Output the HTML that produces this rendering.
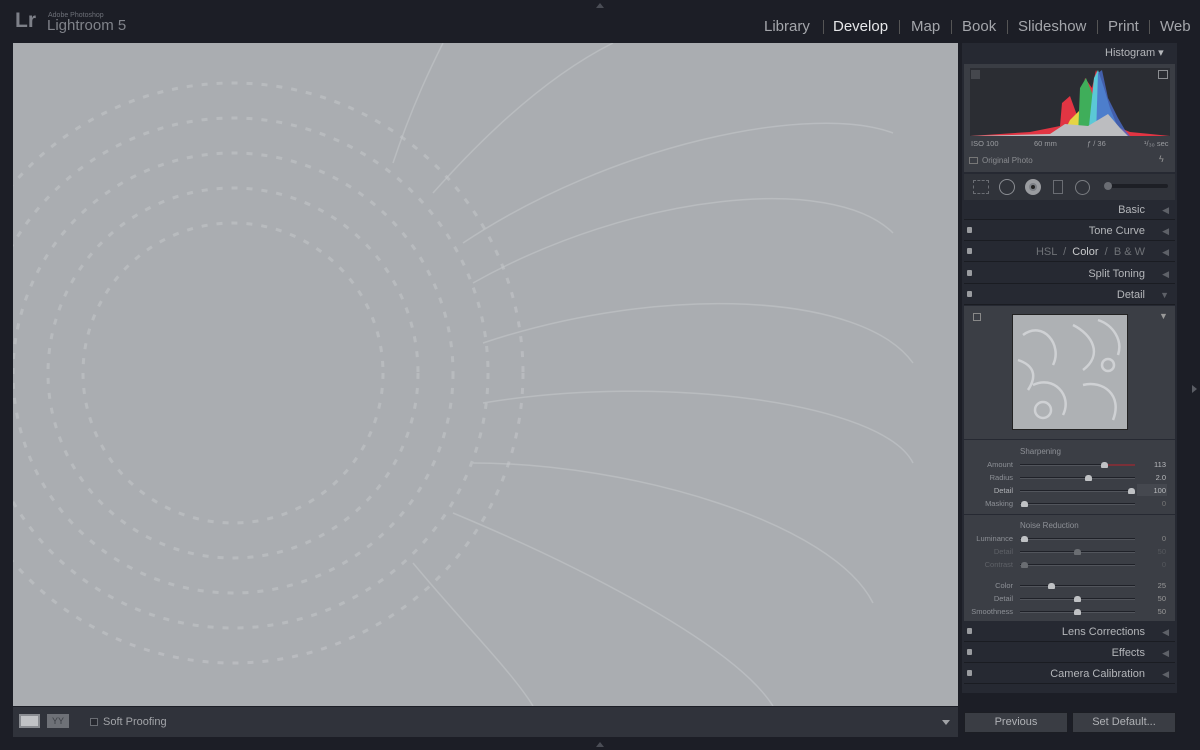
<!DOCTYPE html><html><head><style>
*{margin:0;padding:0;box-sizing:border-box}
body{width:1200px;height:750px;background:#1c1e26;font-family:"Liberation Sans",sans-serif;position:relative;overflow:hidden;color:#c9cacc}
.a{position:absolute}
.nav{top:18px;font-size:15px;color:#a4a6ab}
.img{left:13px;top:43px;width:945px;height:663px;background:#a9acb0;overflow:hidden}
.hdr{position:absolute;left:964px;width:211px;height:20px;background:#262932;border-bottom:1px solid #1a1c22;font-size:11px;color:#b4b6ba;text-align:right;padding-right:30px;line-height:20px}
.hdr .t{position:absolute;right:6px;top:0;color:#5e6168;font-size:9px}
.hdr .sw{position:absolute;left:3px;top:6px;width:5px;height:6px;background:#9a9ca0;border-radius:1px}
.lb{position:absolute;font-size:7.5px;color:#8d9096;text-align:right;width:60px}
.tr{position:absolute;left:1020px;width:115px;height:2px;background:#1f2128;border-bottom:1px solid #52555c}
.kn{position:absolute;width:7px;height:6px;background:#bfc1c4;border-radius:3px 3px 1px 1px}
.vl{position:absolute;left:1140px;width:26px;text-align:right;font-size:7.5px;color:#b8babd}
</style></head><body>
<div class="a" style="left:15px;top:9px;font-size:21px;color:#7d8088;font-weight:bold">Lr</div>
<div class="a" style="left:48px;top:12px;font-size:7px;color:#6d7078">Adobe Photoshop</div>
<div class="a" style="left:47px;top:17px;font-size:15px;color:#80838a">Lightroom 5</div>
<div class="a" style="left:596px;top:3px;width:0;height:0;border:4px solid transparent;border-bottom:5px solid #4a4d55;border-top:0"></div>
<div class="a nav" style="left:764px">Library</div>
<div class="a nav" style="left:833px;color:#e6e7e9">Develop</div>
<div class="a nav" style="left:911px">Map</div>
<div class="a nav" style="left:962px">Book</div>
<div class="a nav" style="left:1018px">Slideshow</div>
<div class="a nav" style="left:1108px">Print</div>
<div class="a nav" style="left:1160px">Web</div>
<div class="a" style="left:823px;top:20px;width:1px;height:14px;background:#555"></div>
<div class="a" style="left:899px;top:20px;width:1px;height:14px;background:#555"></div>
<div class="a" style="left:951px;top:20px;width:1px;height:14px;background:#555"></div>
<div class="a" style="left:1007px;top:20px;width:1px;height:14px;background:#555"></div>
<div class="a" style="left:1097px;top:20px;width:1px;height:14px;background:#555"></div>
<div class="a" style="left:1149px;top:20px;width:1px;height:14px;background:#555"></div>

<div class="a img">
<svg width="945" height="663" style="position:absolute;left:0;top:0" fill="none" stroke-width="1.5">
<rect width="945" height="663" fill="#aaadb1"/>
<g stroke="#c3c6c9" opacity="0.6">
<path d="M450 200 C600 100 800 60 880 90"/><path d="M460 240 C620 150 820 130 880 190"/>
<path d="M470 300 C650 240 850 250 900 320"/><path d="M470 360 C650 330 870 360 900 420"/>
<path d="M460 420 C620 420 820 480 860 560"/><path d="M440 470 C560 520 720 600 760 663"/>
<path d="M400 520 C450 580 500 630 520 663"/><path d="M420 150 C500 60 560 20 600 0"/>
<path d="M380 120 C400 60 420 20 430 0"/>
</g>
<g stroke="#c4c7ca" stroke-width="3" stroke-dasharray="6 9" opacity="0.55">
<circle cx="220" cy="330" r="150"/><circle cx="220" cy="330" r="185"/><circle cx="220" cy="330" r="220"/><circle cx="220" cy="330" r="255"/><circle cx="220" cy="330" r="290"/>
</g>
</svg></div>

<div class="a" style="left:13px;top:707px;width:945px;height:30px;background:#30333b"></div>
<div class="a" style="left:19px;top:714px;width:21px;height:14px;background:#c1c3c6;border:2px solid #8a8d92"></div>
<div class="a" style="left:47px;top:714px;width:22px;height:14px;background:#6e7177;font-size:9px;color:#3c3f45;text-align:center;line-height:14px">YY</div>
<div class="a" style="left:90px;top:718px;width:8px;height:8px;border:1px solid #6a6d73;background:#26282f"></div>
<div class="a" style="left:103px;top:716px;font-size:11px;color:#a2a4a8">Soft Proofing</div>
<div class="a" style="left:942px;top:720px;width:0;height:0;border:4px solid transparent;border-top:5px solid #a0a2a6;border-bottom:0"></div>

<div class="a" style="left:962px;top:43px;width:215px;height:650px;background:#262932"></div>
<div class="a" style="left:1105px;top:46px;font-size:11px;color:#b4b6ba">Histogram &#9662;</div>
<div class="a" style="left:964px;top:64px;width:211px;height:108px;background:#3a3d44"></div>
<div class="a" style="left:970px;top:68px;width:200px;height:68px;background:#2b2d33;overflow:hidden">
<svg width="200" height="68"><path d="M0 68 L60 64 80 60 90 58 92 35 100 28 108 50 110 38 115 10 122 20 126 2 132 15 138 40 145 58 160 64 200 68Z" fill="#e23543"/>
<path d="M92 68 L100 52 110 42 118 55 125 30 135 45 140 68Z" fill="#e5d443"/>
<path d="M108 68 L110 20 116 10 124 30 126 55 130 68Z" fill="#3fae5a"/>
<path d="M118 68 L124 10 128 2 134 20 140 40 148 60 150 68Z" fill="#5bc8d6"/>
<path d="M126 68 L128 5 132 2 138 30 148 50 155 62 160 68Z" fill="#4a6bc9" opacity=".8"/>
<path d="M0 68 L80 66 95 56 118 58 138 46 150 60 158 68Z" fill="#bcbdc0"/></svg></div>
<div class="a" style="left:971px;top:70px;width:9px;height:9px;background:#45474d"></div>
<div class="a" style="left:1158px;top:70px;width:10px;height:9px;border:1px solid #8c8e92"></div>
<div class="a" style="left:971px;top:139px;font-size:7.5px;color:#9a9ca0">ISO 100</div>
<div class="a" style="left:1034px;top:139px;font-size:7.5px;color:#9a9ca0">60 mm</div>
<div class="a" style="left:1087px;top:139px;font-size:7.5px;color:#9a9ca0">ƒ / 36</div>
<div class="a" style="left:1144px;top:139px;font-size:7.5px;color:#9a9ca0">¹/₃₀ sec</div>
<div class="a" style="left:969px;top:157px;width:9px;height:7px;border:1px solid #777"></div>
<div class="a" style="left:982px;top:156px;font-size:8px;color:#8a8c90">Original Photo</div>
<div class="a" style="left:1159px;top:154px;font-size:9px;color:#999">ϟ</div>
<div class="a" style="left:964px;top:174px;width:211px;height:26px;background:#30333a"></div>
<div class="a" style="left:973px;top:180px;width:16px;height:14px;border:1px dashed #6a6d73"></div>
<div class="a" style="left:999px;top:179px;width:16px;height:16px;border:1px solid #8a8d92;border-radius:50%"></div>
<div class="a" style="left:1025px;top:179px;width:16px;height:16px;background:#7d8086;border-radius:50%;border:4px solid #9a9ca0"><div style="width:4px;height:4px;margin:2px;background:#222;border-radius:50%"></div></div>
<div class="a" style="left:1053px;top:180px;width:10px;height:14px;border:1px solid #6a6d73"></div>
<div class="a" style="left:1075px;top:180px;width:15px;height:15px;border:1px solid #7a7d82;border-radius:50%"></div>
<div class="a" style="left:1104px;top:184px;width:64px;height:4px;background:#1d1f25;border-radius:2px"></div>
<div class="a" style="left:1104px;top:182px;width:8px;height:8px;background:#6a6d73;border-radius:50%"></div>

<div class="hdr" style="top:200px">Basic<span class="t">◀</span></div>
<div class="hdr" style="top:221px"><span class="sw"></span>Tone Curve<span class="t">◀</span></div>
<div class="hdr" style="top:242px;color:#6f7277"><span class="sw"></span>HSL &nbsp;/&nbsp; <span style="color:#c9cacc">Color</span> &nbsp;/&nbsp; B &amp; W<span class="t">◀</span></div>
<div class="hdr" style="top:264px"><span class="sw"></span>Split Toning<span class="t">◀</span></div>
<div class="hdr" style="top:285px"><span class="sw"></span>Detail<span class="t">▼</span></div>
<div class="a" style="left:964px;top:306px;width:211px;height:133px;background:#3b3e45"></div>
<div class="a" style="left:1012px;top:314px;width:116px;height:116px;background:#aeb1b4;border:1px solid #222;overflow:hidden">
<svg width="116" height="116" fill="none" stroke="#d8dadc" stroke-width="2.5" opacity=".8"><path d="M10 20 C30 5 50 30 40 50 M60 10 C80 20 90 40 70 55 M20 70 C40 60 60 80 50 100 M70 70 C90 65 110 80 100 105 M5 45 C20 50 25 60 15 75 M85 5 C100 10 110 25 105 40"/><circle cx="30" cy="95" r="8"/><circle cx="95" cy="50" r="6"/></svg></div>
<div class="a" style="left:973px;top:313px;width:8px;height:8px;border:1px solid #888"></div>
<div class="a" style="left:1159px;top:311px;font-size:9px;color:#999">▼</div>
<div class="a" style="left:964px;top:440px;width:211px;height:74px;background:#3b3e45"></div>
<div class="a" style="left:964px;top:515px;width:211px;height:106px;background:#3b3e45"></div>
<div class="a" style="left:1020px;top:447px;font-size:8px;color:#8d9096">Sharpening</div>
<div class="a" style="left:1020px;top:521px;font-size:8px;color:#8d9096">Noise Reduction</div>

<div class="lb" style="left:953px;top:460px">Amount</div><div class="tr" style="top:464px"></div><div class="a" style="left:1104px;top:464px;width:31px;height:2px;background:#7a3038"></div><div class="kn" style="left:1101px;top:462px"></div><div class="vl" style="top:460px">113</div>
<div class="lb" style="left:953px;top:473px">Radius</div><div class="tr" style="top:477px"></div><div class="kn" style="left:1085px;top:475px"></div><div class="vl" style="top:473px">2.0</div>
<div class="lb" style="left:953px;top:486px;color:#b0b2b6">Detail</div><div class="tr" style="top:490px"></div><div class="kn" style="left:1128px;top:488px"></div><div class="a" style="left:1137px;top:484px;width:30px;height:12px;background:#45484f"></div><div class="vl" style="top:486px">100</div>
<div class="lb" style="left:953px;top:499px">Masking</div><div class="tr" style="top:503px"></div><div class="kn" style="left:1021px;top:501px"></div><div class="vl" style="top:499px;color:#777">0</div>
<div class="lb" style="left:953px;top:534px">Luminance</div><div class="tr" style="top:538px"></div><div class="kn" style="left:1021px;top:536px"></div><div class="vl" style="top:534px;color:#888">0</div>
<div class="lb" style="left:953px;top:547px;color:#5e6167">Detail</div><div class="tr" style="top:551px"></div><div class="kn" style="left:1074px;top:549px;background:#6a6d72"></div><div class="vl" style="top:547px;color:#55585d">50</div>
<div class="lb" style="left:953px;top:560px;color:#5e6167">Contrast</div><div class="tr" style="top:564px"></div><div class="kn" style="left:1021px;top:562px;background:#6a6d72"></div><div class="vl" style="top:560px;color:#55585d">0</div>
<div class="lb" style="left:953px;top:581px">Color</div><div class="tr" style="top:585px"></div><div class="kn" style="left:1048px;top:583px"></div><div class="vl" style="top:581px;color:#999">25</div>
<div class="lb" style="left:953px;top:594px">Detail</div><div class="tr" style="top:598px"></div><div class="kn" style="left:1074px;top:596px"></div><div class="vl" style="top:594px;color:#999">50</div>
<div class="lb" style="left:953px;top:607px">Smoothness</div><div class="tr" style="top:611px"></div><div class="kn" style="left:1074px;top:609px"></div><div class="vl" style="top:607px;color:#999">50</div>

<div class="hdr" style="top:622px"><span class="sw"></span>Lens Corrections<span class="t">◀</span></div>
<div class="hdr" style="top:643px"><span class="sw"></span>Effects<span class="t">◀</span></div>
<div class="hdr" style="top:664px"><span class="sw"></span>Camera Calibration<span class="t">◀</span></div>
<div class="a" style="left:964px;top:712px;width:104px;height:21px;background:#3a3d44;border:1px solid #1c1e24;font-size:11px;color:#b0b2b6;text-align:center;line-height:19px">Previous</div>
<div class="a" style="left:1072px;top:712px;width:104px;height:21px;background:#3a3d44;border:1px solid #1c1e24;font-size:11px;color:#b0b2b6;text-align:center;line-height:19px">Set Default...</div>
<div class="a" style="left:1192px;top:385px;width:0;height:0;border:4px solid transparent;border-left:5px solid #5a5d64;border-right:0"></div>
<div class="a" style="left:596px;top:742px;width:0;height:0;border:4px solid transparent;border-bottom:5px solid #4a4d55;border-top:0"></div>
</body></html>
